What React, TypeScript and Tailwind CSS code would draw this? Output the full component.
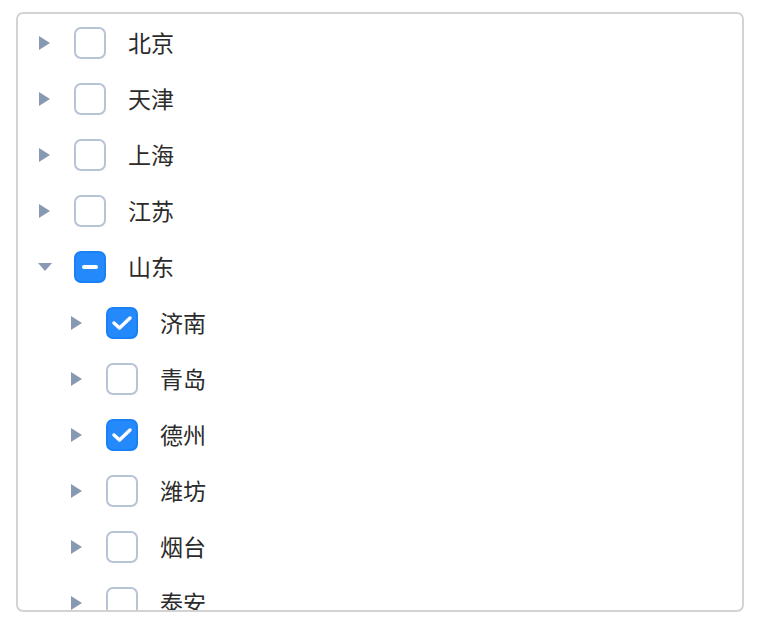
import * as React from "react"

type Check = "none" | "checked" | "partial"

interface Node {
  label: string
  depth: number
  open?: boolean
  check: Check
}

const nodes: Node[] = [
  { label: "北京", depth: 0, check: "none" },
  { label: "天津", depth: 0, check: "none" },
  { label: "上海", depth: 0, check: "none" },
  { label: "江苏", depth: 0, check: "none" },
  { label: "山东", depth: 0, open: true, check: "partial" },
  { label: "济南", depth: 1, check: "checked" },
  { label: "青岛", depth: 1, check: "none" },
  { label: "德州", depth: 1, check: "checked" },
  { label: "潍坊", depth: 1, check: "none" },
  { label: "烟台", depth: 1, check: "none" },
  { label: "泰安", depth: 1, check: "none" },
]

function Caret({ open }: { open?: boolean }) {
  return (
    <svg width="14" height="14" viewBox="0 0 14 14" className="shrink-0">
      {open ? (
        <polygon points="0,3 14,3 7,11" fill="#8a99b3" />
      ) : (
        <polygon points="1,0 12,7 1,14" fill="#8a99b3" />
      )}
    </svg>
  )
}

function Box({ check }: { check: Check }) {
  if (check === "none") {
    return <div className="h-8 w-8 shrink-0 rounded-[7px] border-2 border-[#b8c3d6] bg-white" />
  }
  return (
    <div className="flex h-8 w-8 shrink-0 items-center justify-center rounded-[7px] border-2 border-[#1a80f5] bg-[#2489fb]">
      {check === "checked" ? (
        <svg width="22" height="16" viewBox="0 0 22 16">
          <polyline
            points="3,8 8.5,13 19,3"
            fill="none"
            stroke="#fff"
            strokeWidth="3.5"
            strokeLinecap="round"
            strokeLinejoin="round"
          />
        </svg>
      ) : (
        <div className="h-1 w-4 rounded-sm bg-white" />
      )}
    </div>
  )
}

export default function App() {
  return (
    <div className="h-[634px] w-[768px] bg-white pl-4 pt-3" style={{ fontFamily: '"Noto Sans CJK SC", "Noto Sans", sans-serif' }}>
      <div className="h-[600px] w-[728px] overflow-hidden rounded-[7px] border-2 border-[#d3d3d3] bg-white pt-px">
        {nodes.map((n) => (
          <div
            key={n.label}
            className={n.depth ? "flex h-14 items-center pl-[52px]" : "flex h-14 items-center pl-[20px]"}
          >
            <Caret open={n.open} />
            <div className="ml-[22px]">
              <Box check={n.check} />
            </div>
            <span className="ml-[22px] -mt-0.5 text-[23px] leading-none text-[#2b2b2b]">{n.label}</span>
          </div>
        ))}
      </div>
    </div>
  )
}
